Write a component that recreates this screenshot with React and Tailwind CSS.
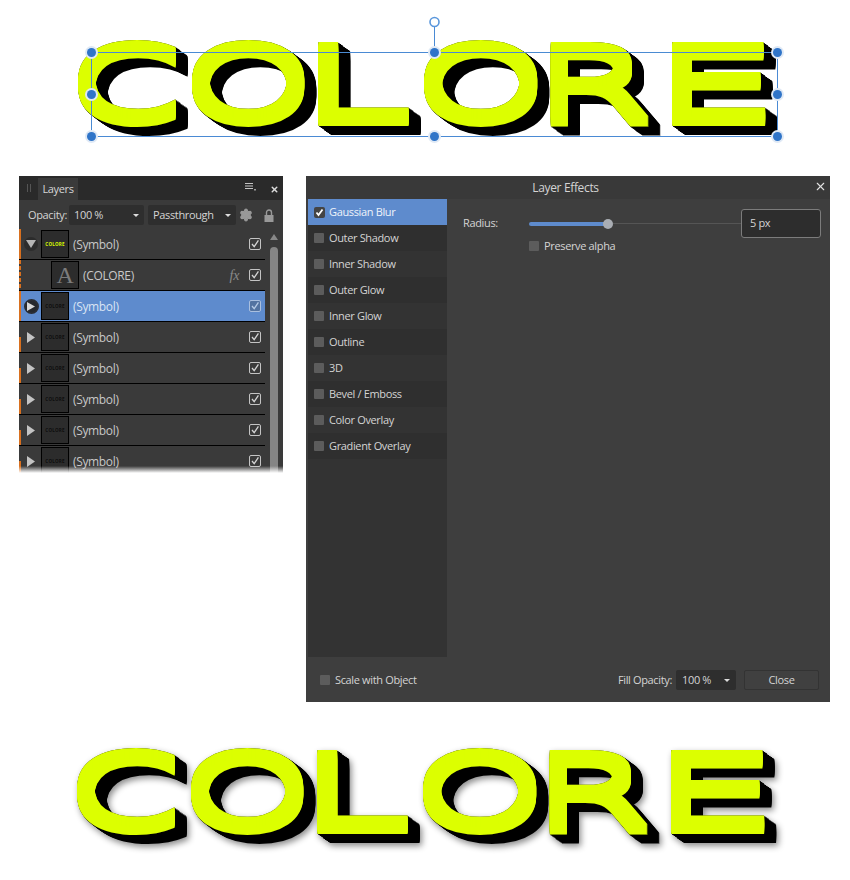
import { Settings, X } from 'lucide-react';

const LETTERS = [
  { ch: 'C', x: 69, w: 115 },
  { ch: 'O', x: 183, w: 130 },
  { ch: 'L', x: 299, w: 110 },
  { ch: 'O', x: 415, w: 131 },
  { ch: 'R', x: 534, w: 119 },
  { ch: 'E', x: 653, w: 124 },
];

const EFFECTS = ['Outer Shadow', 'Inner Shadow', 'Outer Glow', 'Inner Glow', 'Outline', '3D', 'Bevel / Emboss', 'Color Overlay', 'Gradient Overlay'];

const SWEEP = [-5, -4, -3, -2, -1, 0, 1, 2, 3, 4, 5];
const EXTRUDE = Array.from({ length: 17 }, (_, i) => i * 0.75);

function Word({ id, baseline, dx = 0, blurred }) {
  return (
    <g transform={`translate(${dx} 0)`}>
      <defs>
        <g id={`${id}-glyphs`} className="font-['DejaVu_Sans'] text-[101px]">
          {LETTERS.map((l, i) => (
            <text key={i} x={l.x} y={baseline} textLength={l.w} lengthAdjust="spacingAndGlyphs">
              {l.ch}
            </text>
          ))}
        </g>
        <g id={id}>
          {SWEEP.map((d) => (
            <use key={d} href={`#${id}-glyphs`} y={d} />
          ))}
        </g>
      </defs>
      <g className={blurred ? 'drop-shadow-[2px_3px_3px_rgba(0,0,0,0.45)]' : ''}>
        {EXTRUDE.map((d) => (
          <use key={d} href={`#${id}`} x={d} y={d * 0.75} className="fill-black" />
        ))}
        <use href={`#${id}`} className="fill-[#dcff00]" />
      </g>
    </g>
  );
}

function Handle({ cx, cy }) {
  return (
    <g>
      <circle cx={cx} cy={cy} r="6.5" className="fill-[#dfe9f5]" />
      <circle cx={cx} cy={cy} r="4.5" className="fill-[#2f74c8]" />
    </g>
  );
}

function TopArt() {
  return (
    <svg width="850" height="176" className="block">
      <Word id="colore-top" baseline={121} />
      <rect x="91.5" y="52.5" width="686" height="84" fill="none" stroke="#4a8ad4" strokeWidth="1" />
      <line x1="434.5" y1="27" x2="434.5" y2="52" stroke="#4a8ad4" strokeWidth="1" />
      <circle cx="434.5" cy="22" r="4.5" fill="#fff" stroke="#5a97dc" strokeWidth="1.6" />
      {[[91.5, 52.5], [434.5, 52.5], [777.5, 52.5], [91.5, 94.5], [777.5, 94.5], [91.5, 136.5], [434.5, 136.5], [777.5, 136.5]].map(([x, y]) => (
        <Handle key={`${x}-${y}`} cx={x} cy={y} />
      ))}
    </svg>
  );
}

function Check({ dim }) {
  return (
    <span className={`flex h-[12px] w-[12px] items-center justify-center rounded-[2px] border ${dim ? 'border-[#a9bfdf]' : 'border-[#c4c4c4]'} bg-[#3a3a3a]/30`}>
      <svg width="10" height="10" viewBox="0 0 10 10">
        <path d="M2 5l2.2 2.6L8.4 1.4" fill="none" stroke={dim ? '#b7cbe6' : '#d4d4d4'} strokeWidth="1.3" />
      </svg>
    </span>
  );
}

function Thumb({ lit }) {
  return (
    <span className="flex h-[28px] w-[28px] shrink-0 items-center justify-center overflow-hidden border border-black bg-[#2c2c2c]">
      <span className={`text-[4.5px] font-bold leading-none tracking-[0.2px] ${lit ? 'text-[#dcff00]' : 'text-[#0c0c0c]'}`}>COLORE</span>
    </span>
  );
}

function Arrow({ kind }) {
  if (kind === 'open') {
    return (
      <span className="flex h-[14px] w-[14px] items-center justify-center rounded-full bg-[#2c2c2c]">
        <svg width="10" height="8" viewBox="0 0 10 8"><path d="M0 0h10L5 8z" fill="#b5b5b5" /></svg>
      </span>
    );
  }
  if (kind === 'active') {
    return (
      <span className="flex h-[15px] w-[15px] items-center justify-center rounded-full border-2 border-[#2a2d33] bg-[#25282d]">
        <svg width="8" height="9" viewBox="0 0 8 9"><path d="M0 0l8 4.5L0 9z" fill="#d8d8d8" /></svg>
      </span>
    );
  }
  return (
    <span className="flex h-[14px] w-[14px] items-center justify-center">
      <svg width="8" height="11" viewBox="0 0 8 11"><path d="M0 0l8 5.5L0 11z" fill="#c4c4c4" /></svg>
    </span>
  );
}

function SymbolRow({ arrow, lit, selected, orange = 'half' }) {
  return (
    <div className={`relative flex h-[31px] shrink-0 items-center border-b border-black pl-[2px] pr-[4px] ${selected ? 'bg-[#5e8bcd]' : 'bg-[#3a3a3a]'}`}>
      <span className={`absolute bottom-0 left-0 w-[2px] bg-[#d8701f] ${orange === 'full' ? 'top-0' : 'top-1/2'}`} />
      <span className="flex w-[20px] justify-center"><Arrow kind={arrow} /></span>
      <Thumb lit={lit} />
      <span className={`ml-[4px] flex-1 pt-[2px] text-[12px] ${selected ? 'text-[#d9e4f4]' : 'text-[#c8c8c8]'}`}>(Symbol)</span>
      <Check dim={selected} />
    </div>
  );
}

function LayersPanel() {
  return (
    <div className="relative h-[297px] w-[264px] shrink-0 overflow-hidden bg-[#3a3a3a] text-[11px] text-[#d4d4d4]">
      <div className="flex h-[24px] items-end bg-[#2a2a2a]">
        <span className="mb-[8px] ml-[8px] h-[8px] w-[4px] border-x border-[#555]" />
        <span className="ml-[7px] flex h-[22px] w-[40px] items-center justify-center bg-[#3a3a3a] text-[#d6d6d6]">Layers</span>
        <svg width="11" height="8" viewBox="0 0 11 8" className="mb-[9px] ml-auto">
          <path d="M0 .5h8M0 3h8M0 5.5h8" stroke="#c4c4c4" strokeWidth="1.2" />
          <rect x="9" y="6" width="2" height="1.5" fill="#9a9a9a" />
        </svg>
        <X className="mb-[6px] ml-[14px] mr-[4px] h-[9px] w-[9px] text-[#ddd]" strokeWidth={4} />
      </div>
      <div className="flex h-[29px] items-center pl-[9px] pt-[1px]">
        <span className="w-[41px]">Opacity:</span>
        <span className="flex h-[20px] w-[75px] items-center justify-between rounded-[2px] bg-[#2e2e2e] px-[5px]">
          100 %<span className="border-x-[3px] border-t-[3px] border-x-transparent border-t-[#ddd]" />
        </span>
        <span className="ml-[4px] flex h-[20px] w-[88px] items-center justify-between rounded-[2px] bg-[#2e2e2e] px-[5px]">
          Passthrough<span className="border-x-[3px] border-t-[3px] border-x-transparent border-t-[#ddd]" />
        </span>
        <Settings className="ml-[3px] h-[14px] w-[14px] fill-[#999] text-[#999]" />
        <svg width="10" height="13" viewBox="0 0 10 13" className="ml-[11px]">
          <path d="M2.5 6V3.5a2.5 2.5 0 0 1 5 0V6" fill="none" stroke="#999" strokeWidth="1.4" />
          <rect x="0.5" y="6" width="9" height="7" fill="#999" />
        </svg>
      </div>
      <div className="flex">
        <div className="flex w-[246px] flex-col">
          <SymbolRow arrow="open" lit orange="full" />
          <div className="relative flex h-[31px] shrink-0 items-center border-b border-black pr-[4px]">
            <span className="absolute inset-y-0 left-0 w-[2px] bg-[repeating-linear-gradient(#d8701f_0_4px,transparent_4px_6px)]" />
            <span className="ml-[32px] flex h-[28px] w-[28px] items-center justify-center border border-black bg-[#2c2c2c] font-['Liberation_Serif'] text-[24px] leading-none text-[#7c7c7c]">A</span>
            <span className="ml-[4px] flex-1 pt-[2px] text-[12px] text-[#c8c8c8]">(COLORE)</span>
            <span className="mr-[10px] font-['Liberation_Serif'] text-[14px] italic text-[#8a8a8a]">fx</span>
            <Check />
          </div>
          <SymbolRow arrow="active" selected orange="full" />
          <SymbolRow />
          <SymbolRow />
          <SymbolRow />
          <SymbolRow />
          <SymbolRow />
        </div>
        <div className="relative ml-[5px] w-[8px]">
          <span className="absolute left-0 top-[5px] border-x-[4px] border-b-[6px] border-x-transparent border-b-[#888]" />
          <span className="absolute inset-x-0 bottom-0 top-[18px] rounded-t-[4px] bg-[#858585]" />
        </div>
      </div>
      <div className="absolute inset-x-0 bottom-0 h-[7px] bg-gradient-to-b from-transparent to-white" />
    </div>
  );
}

function EffectsDialog() {
  return (
    <div className="flex h-[526px] w-[524px] shrink-0 flex-col bg-[#3e3e3e] text-[11px] text-[#d4d4d4]">
      <div className="relative flex h-[23px] shrink-0 items-center justify-center bg-[#393939] pr-[5px] text-[12px]">
        Layer Effects
        <X className="absolute right-[3px] top-[4px] h-[13px] w-[13px] text-[#e2e2e2]" strokeWidth={2} />
      </div>
      <div className="flex flex-1">
        <div className="ml-[2px] flex h-[458px] w-[139px] shrink-0 flex-col bg-[#333333]">
          <div className="flex h-[26px] shrink-0 items-center gap-[4px] bg-[#5e8bcd] pl-[6px] text-[#eef3fa]">
            <span className="flex h-[11px] w-[11px] items-center justify-center rounded-[2px] bg-[#444]">
              <svg width="9" height="9" viewBox="0 0 9 9"><path d="M1.5 4.5l2 2.5L7.5 1.5" fill="none" stroke="#fff" strokeWidth="1.8" /></svg>
            </span>
            Gaussian Blur
          </div>
          {EFFECTS.map((name, i) => (
            <div key={name} className={`flex h-[26px] shrink-0 items-center gap-[5px] pl-[6px] ${i % 2 ? 'bg-[#333333]' : 'bg-[#2f2f2f]'}`}>
              <span className="h-[10px] w-[10px] rounded-[1px] bg-[#5c5c5c]" />
              {name}
            </div>
          ))}
        </div>
        <div className="flex-1 pl-[16px] pt-[10px]">
          <div className="flex h-[29px] items-center">
            <span className="w-[66px]">Radius:</span>
            <div className="flex w-[212px] items-center">
              <span className="h-[4px] w-[75px] rounded-l-[2px] bg-[#5e8bcd]" />
              <span className="z-10 -ml-[1px] h-[10px] w-[10px] shrink-0 rounded-full bg-[#a9adb3]" />
              <span className="h-px flex-1 bg-[#555]" />
            </div>
            <span className="flex h-[29px] w-[80px] items-center rounded-[3px] border border-[#7c7c7c] bg-[#2d2d2d] pl-[8px]">5 px</span>
          </div>
          <div className="ml-[66px] flex items-center gap-[5px]">
            <span className="h-[10px] w-[10px] rounded-[1px] bg-[#5c5c5c]" />
            Preserve alpha
          </div>
        </div>
      </div>
      <div className="flex h-[44px] shrink-0 items-center pl-[14px] pr-[11px]">
        <span className="h-[10px] w-[10px] rounded-[1px] bg-[#5c5c5c]" />
        <span className="ml-[5px]">Scale with Object</span>
        <span className="ml-auto">Fill Opacity:</span>
        <span className="ml-[4px] flex h-[20px] w-[60px] items-center justify-between rounded-[2px] bg-[#2e2e2e] px-[6px]">
          100 %<span className="border-x-[3px] border-t-[3px] border-x-transparent border-t-[#ddd]" />
        </span>
        <span className="ml-[8px] flex h-[20px] w-[75px] items-center justify-center rounded-[2px] border border-[#333] bg-[#404040]">Close</span>
      </div>
    </div>
  );
}

export default function App() {
  return (
    <div className="h-[880px] w-[850px] overflow-hidden bg-white font-['Open_Sans',sans-serif] tracking-[-0.35px]">
      <TopArt />
      <div className="flex items-start gap-[23px] pl-[19px]">
        <LayersPanel />
        <EffectsDialog />
      </div>
      <svg width="850" height="178" className="block">
        <Word id="colore-bottom" baseline={127} dx={-1} blurred />
      </svg>
    </div>
  );
}
